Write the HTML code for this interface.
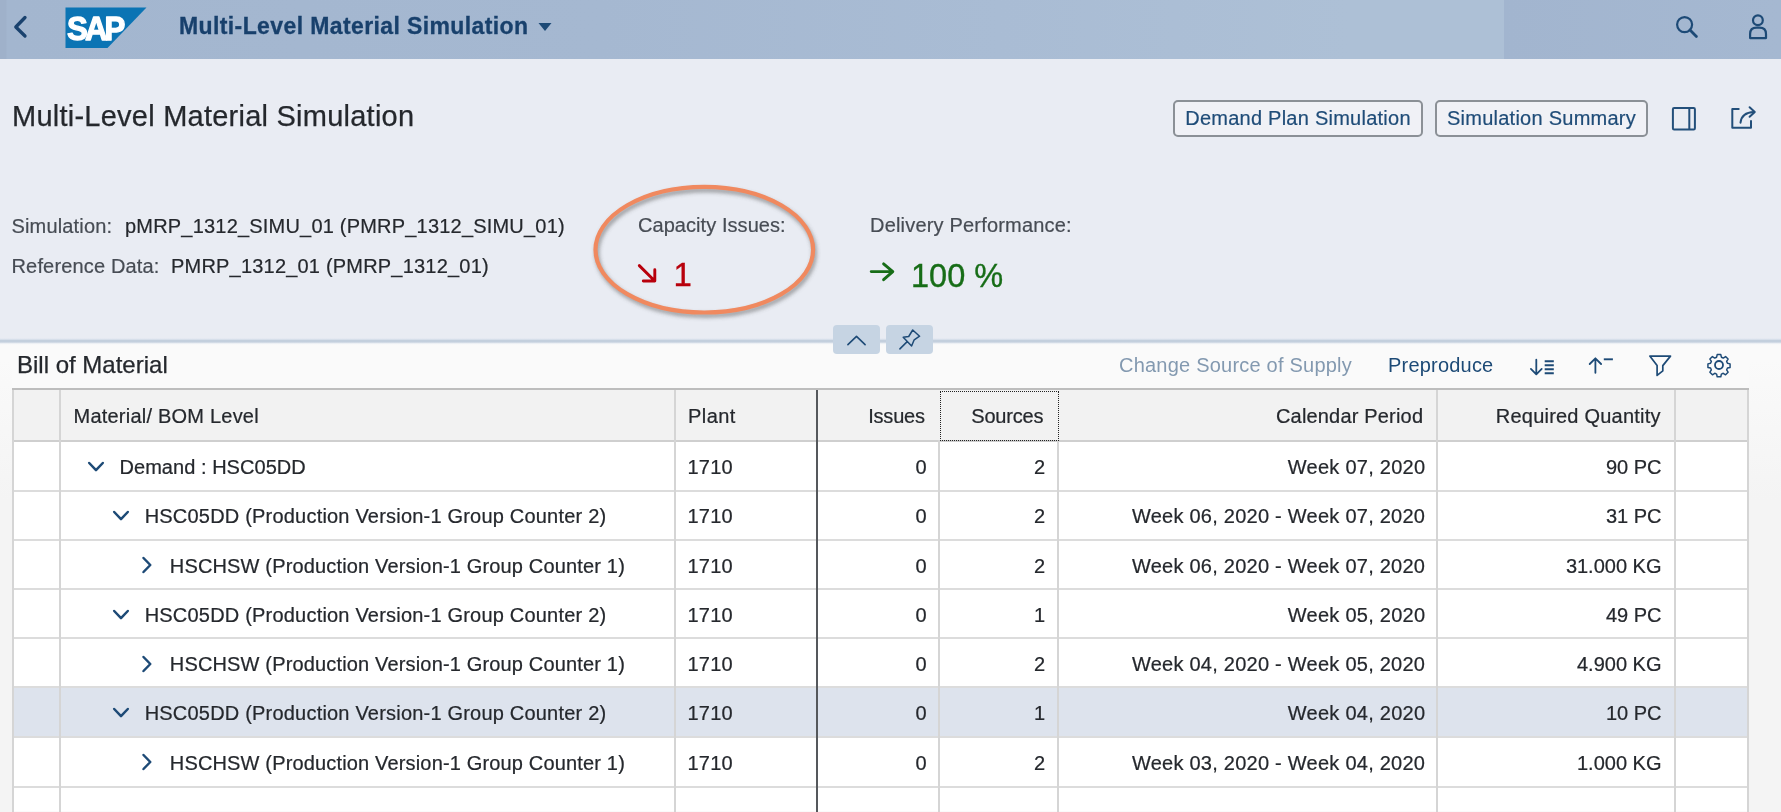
<!DOCTYPE html>
<html lang="en">
<head>
<meta charset="utf-8">
<title>Multi-Level Material Simulation</title>
<style>
*{box-sizing:border-box;margin:0;padding:0}
html,body{width:1781px;height:812px;overflow:hidden}
body{position:relative;background:#e9ecf3;font-family:"Liberation Sans",sans-serif;color:#2b2e33}
.abs{position:absolute;white-space:nowrap}
.cell,.btn span,.abs{will-change:opacity}
/* shell header */
#shell{position:absolute;left:0;top:0;width:1781px;height:59px;background:linear-gradient(90deg,#9fb1ca 0,#9fb1ca 6px,#a3b6cf 7px,#a5b8d1 600px,#a9bcd4 1000px,#adc0d6 1350px,#adc0d6 1503px)}
#shell .r{position:absolute;left:1504px;top:0;width:277px;height:59px;background:linear-gradient(90deg,#a2b5cf,#a5b8d1)}
#shelltitle{left:179px;top:12px;font-size:23px;letter-spacing:.39px;font-weight:bold;color:#18406c;-webkit-text-stroke:.3px #18406c;line-height:28px}
/* page header */
#ptitle{left:12px;top:98px;font-size:29px;letter-spacing:.24px;-webkit-text-stroke:.25px #25282d;line-height:36px;color:#25282d}
.btn span{display:inline-block}
.btn{position:absolute;top:100px;height:37px;border:2px solid #8b9096;border-radius:5px;background:#f0f1f6;color:#1f4c78;-webkit-text-stroke:.2px #1f4c78;font-size:20px;letter-spacing:.25px;line-height:33px;text-align:center;white-space:nowrap}
.lbl{font-size:20px;letter-spacing:.16px;color:#474c54;-webkit-text-stroke:.2px #474c54;line-height:24px}
.val{font-size:20px;letter-spacing:.2px;-webkit-text-stroke:.2px #25282d;color:#25282d;line-height:24px}
/* content */
#content{position:absolute;left:0;top:345px;width:1781px;height:467px;background:#fafafa}
#divider{position:absolute;left:0;top:338px;width:1781px;height:7px;background:linear-gradient(#e9ecf4 0%,#dde4ee 18%,#c3cfdd 32%,#c3cfdd 58%,#e4e9f0 72%,#f6f7f9 86%,#fafafa 100%)}
#tbl{position:absolute;left:0;top:0;width:1781px;height:812px}
.tbg{position:absolute;left:12px;top:388px;width:1737px;height:423px;background:#fff}
.hrow{position:absolute;left:12px;top:388px;width:1737px;height:54px;background:#f2f2f2;border-top:2px solid #bdbdbd;border-bottom:2px solid #cfcfcf}
.row{position:absolute;left:12px;width:1737px;border-bottom:2px solid #dcdcdc}
.row.sel{background:#dde3ed}
.vl{position:absolute;top:390px;width:2px;height:422px;background:#d5d5d5}
.vl.dk{background:#55585c}
.cell{position:absolute;top:13px;font-size:20px;-webkit-text-stroke:.22px #25282d;line-height:24px;color:#25282d;white-space:nowrap}
.hrow .cell{top:14px}
.side{position:absolute;top:360px;height:452px;background:linear-gradient(#fafafa,#f4f4f4 140px)}
.cov{position:absolute;top:390px;width:2px;height:50px;background:#f2f2f2}
.focus{position:absolute;left:940px;top:391px;width:119px;height:50px;border:1px dotted #222;}
.rt{text-align:right}
</style>
</head>
<body>
<div id="shell"><div class="r"></div>
  <svg class="abs" style="left:12px;top:14px" width="18" height="26" viewBox="0 0 18 26"><path d="M13 3.500 L3.800 13 L13 22" fill="none" stroke="#1a426e" stroke-width="3.300" stroke-linecap="round" stroke-linejoin="round"/></svg>
  <svg class="abs" style="left:65px;top:7px" width="83" height="42" viewBox="0 0 83 42"><path d="M0.5 0.5 H81.5 L42.5 41 H0.5 Z" fill="#0b74b4"/><text x="2" y="33" font-family="Liberation Sans, sans-serif" font-weight="bold" font-size="32.500" fill="#fff" stroke="#fff" stroke-width="1.300" stroke-linejoin="round" textLength="55.500" lengthAdjust="spacingAndGlyphs" letter-spacing="-3">SAP</text></svg>
  <div id="shelltitle" class="abs">Multi-Level Material Simulation</div>
  <svg class="abs" style="left:537px;top:21px" width="16" height="12" viewBox="0 0 16 12"><path d="M1.5 2 H14.5 L8 10 Z" fill="#1d4a76"/></svg>
  <svg class="abs" style="left:1674px;top:14px" width="26" height="26" viewBox="0 0 26 26"><circle cx="10.600" cy="10.600" r="7.500" fill="none" stroke="#1d4a76" stroke-width="2.200"/><path d="M16 16 L22.400 22.400" stroke="#1d4a76" stroke-width="2.800" stroke-linecap="round"/></svg>
  <svg class="abs" style="left:1745px;top:12px" width="24" height="28" viewBox="0 0 24 28"><circle cx="12.900" cy="8.300" r="4.900" fill="none" stroke="#1d4a76" stroke-width="2.200"/><path d="M5.100 26.100 V22 Q5.100 15.700 11.600 15.700 H14.400 Q21 15.700 21 22 V26.100 Z" fill="none" stroke="#1d4a76" stroke-width="2.200" stroke-linejoin="round"/></svg>
</div>

<div id="ptitle" class="abs">Multi-Level Material Simulation</div>
<div class="btn" style="left:1173px;width:250px"><span>Demand Plan Simulation</span></div>
<div class="btn" style="left:1435px;width:213px"><span>Simulation Summary</span></div>
<svg class="abs" style="left:1670px;top:105px" width="28" height="28" viewBox="0 0 28 28"><rect x="2.900" y="3" width="22" height="21.400" rx="1.200" fill="none" stroke="#234f7a" stroke-width="2"/><path d="M19.300 3 V24.400" stroke="#234f7a" stroke-width="2"/></svg>
<svg class="abs" style="left:1729px;top:104px" width="30" height="28" viewBox="0 0 30 28"><path d="M9.700 5.100 H3.300 V23.800 H22 V17" fill="none" stroke="#234f7a" stroke-width="2" stroke-linejoin="round" stroke-linecap="round"/><path d="M11.500 18.700 Q12.500 8.300 25 7.900" fill="none" stroke="#234f7a" stroke-width="2" stroke-linecap="round"/><path d="M20.600 3.200 L25.800 7.900 L20.600 12.800" fill="none" stroke="#234f7a" stroke-width="2" stroke-linejoin="round" stroke-linecap="round"/></svg>

<div class="abs lbl" style="left:11.500px;top:214px">Simulation:</div>
<div class="abs val" style="left:125px;top:214px">pMRP_1312_SIMU_01 (PMRP_1312_SIMU_01)</div>
<div class="abs lbl" style="left:11.500px;top:254px">Reference Data:</div>
<div class="abs val" style="left:171px;top:254px">PMRP_1312_01 (PMRP_1312_01)</div>

<div class="abs lbl" style="left:638px;top:213px;letter-spacing:.06px">Capacity Issues:</div>
<div class="abs lbl" style="left:870px;top:213px;letter-spacing:.19px">Delivery Performance:</div>
<svg class="abs" style="left:635px;top:261px" width="24" height="24" viewBox="0 0 24 24"><path d="M4.300 4.600 L19 19.300 M8.300 20 H19.800 V8.800" fill="none" stroke="#b8000c" stroke-width="2.900" stroke-linecap="round" stroke-linejoin="round"/></svg>
<div class="abs" style="left:673.500px;top:255px;font-size:33px;line-height:40px;color:#b8000c;-webkit-text-stroke:.35px #b8000c">1</div>
<svg class="abs" style="left:868px;top:259px" width="28" height="24" viewBox="0 0 28 24"><path d="M3.200 12.600 H24 M15.600 4.900 L24.800 12.600 L15.600 20.700" fill="none" stroke="#176d17" stroke-width="2.900" stroke-linecap="round" stroke-linejoin="round"/></svg>
<div class="abs" style="left:911px;top:256px;font-size:32.500px;line-height:40px;color:#176d17;-webkit-text-stroke:.35px #176d17">100 %</div>
<svg class="abs" style="left:585px;top:176px" width="240" height="150" viewBox="0 0 240 150"><defs><filter id="sh" x="-10%" y="-10%" width="120%" height="130%"><feGaussianBlur stdDeviation="2.2"/></filter></defs><ellipse cx="119.300" cy="73.700" rx="108.800" ry="62.800" fill="none" stroke="#5a5a5a" stroke-opacity=".7" stroke-width="3.500" filter="url(#sh)" transform="translate(1.500,3)"/><ellipse cx="119.300" cy="73.700" rx="108.800" ry="62.800" fill="none" stroke="#f0895f" stroke-width="4.200"/></svg>

<div id="divider"></div>
<div id="content"></div>
<div class="abs" style="left:833px;top:325px;width:47px;height:29px;background:#c6d4e3;border-radius:4px"></div>
<div class="abs" style="left:886px;top:325px;width:47px;height:29px;background:#c6d4e3;border-radius:4px"></div>
<svg class="abs" style="left:845px;top:332px" width="24" height="16" viewBox="0 0 24 16"><path d="M2.900 12.600 L11.500 4.300 L20.100 12.600" fill="none" stroke="#1d4a76" stroke-width="1.600" stroke-linecap="round" stroke-linejoin="round"/></svg>
<svg class="abs" style="left:895px;top:325px" width="30" height="30" viewBox="0 0 30 30"><path d="M17.700 5 L24.600 11.200 L19.200 14.800 L16.600 21 L8.200 12.300 L13.700 11.500 Z M12.200 16.600 L4.900 23.900" fill="none" stroke="#1d4a76" stroke-width="1.500" stroke-linejoin="round" stroke-linecap="round"/></svg>

<div class="abs" style="left:17px;top:351px;font-size:24px;-webkit-text-stroke:.25px #25282d;line-height:28px;color:#25282d">Bill of Material</div>
<div class="abs" style="left:1119px;top:353px;font-size:20px;letter-spacing:.22px;line-height:24px;color:#8399b0">Change Source of Supply</div>
<div class="abs" style="left:1388px;top:353px;font-size:20px;letter-spacing:.2px;line-height:24px;color:#1d4a76">Preproduce</div>
<svg class="abs" style="left:1528px;top:354px" width="28" height="24" viewBox="0 0 28 24"><path d="M8.300 5.700 V20 M2.900 14.900 L8.300 20.300 L13.700 14.900" fill="none" stroke="#1d4a76" stroke-width="1.800" stroke-linecap="round" stroke-linejoin="round"/><path d="M16.700 7.200 H25.800 M16.700 11.200 H25.800 M16.700 15.200 H25.800 M16.700 19.200 H25.800" stroke="#1d4a76" stroke-width="1.900"/></svg>
<svg class="abs" style="left:1587px;top:352px" width="28" height="24" viewBox="0 0 28 24"><path d="M8.400 20.800 V6.600 M2.700 12 L8.400 6.300 L14.100 12" fill="none" stroke="#1d4a76" stroke-width="1.800" stroke-linecap="round" stroke-linejoin="round"/><path d="M16.800 7.300 H25.900" stroke="#1d4a76" stroke-width="1.900"/></svg>
<svg class="abs" style="left:1646px;top:353px" width="28" height="26" viewBox="0 0 28 26"><path d="M3.800 3.100 H24.500 L16.800 12.600 V17.900 L11.100 22.400 V12.600 Z" fill="none" stroke="#1d4a76" stroke-width="1.700" stroke-linejoin="round"/></svg>
<svg class="abs" style="left:1705.300px;top:351px" width="28" height="28" viewBox="0 0 28 28"><g fill="none" stroke="#1d4a76" stroke-width="1.800" stroke-linejoin="round"><circle cx="14" cy="14" r="4"/><path d="M11.800 2.500 h4.400 l.7 3.200 l2.300 1 l2.800 -1.800 l3.100 3.100 l-1.800 2.800 l1 2.300 l3.200 .7 v4.400 l-3.200 .7 l-1 2.300 l1.800 2.800 l-3.100 3.100 l-2.800 -1.800 l-2.300 1 l-.7 3.200 h-4.400 l-.7 -3.200 l-2.300 -1 l-2.800 1.800 l-3.100 -3.100 l1.800 -2.800 l-1 -2.300 l-3.200 -.7 v-4.400 l3.200 -.7 l1 -2.300 l-1.800 -2.800 l3.100 -3.100 l2.800 1.800 l2.300 -1 z" transform="translate(14 14) scale(.82) translate(-14 -15.200)"/></g></svg>

<div id="tbl">
  <div class="side" style="left:0;width:12px"></div><div class="side" style="left:1749px;width:32px"></div>
  <div class="tbg"></div>
  <div class="hrow">
    <div class="cell" style="left:61.5px;top:14px;letter-spacing:0.22px">Material/ BOM Level</div>
    <div class="cell" style="left:676px;top:14px;letter-spacing:0.44px">Plant</div>
    <div class="cell rt" style="right:824.2px;top:14px;letter-spacing:-0.2px">Issues</div>
    <div class="cell rt" style="right:705.69px;top:14px;letter-spacing:-0.19px">Sources</div>
    <div class="cell rt" style="right:325.82px;top:14px;letter-spacing:0.18px">Calendar Period</div>
    <div class="cell rt" style="right:88.28px;top:14px;letter-spacing:0.22px">Required Quantity</div>
  </div>
  <div class="row" style="top:441px;height:51px"><svg class="abs" style="left:75px;top:16.9px" width="18" height="18" viewBox="0 0 18 18"><path d="M2.200 5 L9 12.200 L15.800 5" fill="none" stroke="#1d4a76" stroke-width="2.500" stroke-linecap="round" stroke-linejoin="round"/></svg>
    <div class="cell" style="left:107.5px;top:14px;letter-spacing:0.04px">Demand : HSC05DD</div>
    <div class="cell" style="left:675.5px;top:14px;letter-spacing:0.25px">1710</div>
    <div class="cell rt" style="right:822.5px;top:14px">0</div>
    <div class="cell rt" style="right:704px;top:14px">2</div>
    <div class="cell rt" style="right:323.75px;top:14px;letter-spacing:0.25px">Week 07, 2020</div>
    <div class="cell rt" style="right:87.5px;top:14px">90 PC</div>
  </div>
  <div class="row" style="top:492px;height:49px"><svg class="abs" style="left:100.3px;top:15.2px" width="18" height="18" viewBox="0 0 18 18"><path d="M2.200 5 L9 12.200 L15.800 5" fill="none" stroke="#1d4a76" stroke-width="2.500" stroke-linecap="round" stroke-linejoin="round"/></svg>
    <div class="cell" style="left:132.7px;top:12px;letter-spacing:0.2px">HSC05DD (Production Version-1 Group Counter 2)</div>
    <div class="cell" style="left:675.5px;top:12px;letter-spacing:0.25px">1710</div>
    <div class="cell rt" style="right:822.5px;top:12px">0</div>
    <div class="cell rt" style="right:704px;top:12px">2</div>
    <div class="cell rt" style="right:323.75px;top:12px;letter-spacing:0.25px">Week 06, 2020 - Week 07, 2020</div>
    <div class="cell rt" style="right:87.5px;top:12px">31 PC</div>
  </div>
  <div class="row" style="top:541px;height:49px"><svg class="abs" style="left:125.5px;top:15.1px" width="18" height="18" viewBox="0 0 18 18"><path d="M5.500 2 L12.300 9 L5.500 16" fill="none" stroke="#1d4a76" stroke-width="2.500" stroke-linecap="round" stroke-linejoin="round"/></svg>
    <div class="cell" style="left:157.8px;top:13px;letter-spacing:0.16px">HSCHSW (Production Version-1 Group Counter 1)</div>
    <div class="cell" style="left:675.5px;top:13px;letter-spacing:0.25px">1710</div>
    <div class="cell rt" style="right:822.5px;top:13px">0</div>
    <div class="cell rt" style="right:704px;top:13px">2</div>
    <div class="cell rt" style="right:323.75px;top:13px;letter-spacing:0.25px">Week 06, 2020 - Week 07, 2020</div>
    <div class="cell rt" style="right:87.5px;top:13px">31.000 KG</div>
  </div>
  <div class="row" style="top:590px;height:49px"><svg class="abs" style="left:100.3px;top:15.8px" width="18" height="18" viewBox="0 0 18 18"><path d="M2.200 5 L9 12.200 L15.800 5" fill="none" stroke="#1d4a76" stroke-width="2.500" stroke-linecap="round" stroke-linejoin="round"/></svg>
    <div class="cell" style="left:132.7px;top:13px;letter-spacing:0.2px">HSC05DD (Production Version-1 Group Counter 2)</div>
    <div class="cell" style="left:675.5px;top:13px;letter-spacing:0.25px">1710</div>
    <div class="cell rt" style="right:822.5px;top:13px">0</div>
    <div class="cell rt" style="right:704px;top:13px">1</div>
    <div class="cell rt" style="right:323.75px;top:13px;letter-spacing:0.25px">Week 05, 2020</div>
    <div class="cell rt" style="right:87.5px;top:13px">49 PC</div>
  </div>
  <div class="row" style="top:639px;height:49px"><svg class="abs" style="left:125.5px;top:15.7px" width="18" height="18" viewBox="0 0 18 18"><path d="M5.500 2 L12.300 9 L5.500 16" fill="none" stroke="#1d4a76" stroke-width="2.500" stroke-linecap="round" stroke-linejoin="round"/></svg>
    <div class="cell" style="left:157.8px;top:13px;letter-spacing:0.16px">HSCHSW (Production Version-1 Group Counter 1)</div>
    <div class="cell" style="left:675.5px;top:13px;letter-spacing:0.25px">1710</div>
    <div class="cell rt" style="right:822.5px;top:13px">0</div>
    <div class="cell rt" style="right:704px;top:13px">2</div>
    <div class="cell rt" style="right:323.75px;top:13px;letter-spacing:0.25px">Week 04, 2020 - Week 05, 2020</div>
    <div class="cell rt" style="right:87.5px;top:13px">4.900 KG</div>
  </div>
  <div class="row sel" style="top:688px;height:50px"><svg class="abs" style="left:100.3px;top:16.4px" width="18" height="18" viewBox="0 0 18 18"><path d="M2.200 5 L9 12.200 L15.800 5" fill="none" stroke="#1d4a76" stroke-width="2.500" stroke-linecap="round" stroke-linejoin="round"/></svg>
    <div class="cell" style="left:132.7px;top:13px;letter-spacing:0.2px">HSC05DD (Production Version-1 Group Counter 2)</div>
    <div class="cell" style="left:675.5px;top:13px;letter-spacing:0.25px">1710</div>
    <div class="cell rt" style="right:822.5px;top:13px">0</div>
    <div class="cell rt" style="right:704px;top:13px">1</div>
    <div class="cell rt" style="right:323.75px;top:13px;letter-spacing:0.25px">Week 04, 2020</div>
    <div class="cell rt" style="right:87.5px;top:13px">10 PC</div>
  </div>
  <div class="row" style="top:738px;height:50px"><svg class="abs" style="left:125.5px;top:15.3px" width="18" height="18" viewBox="0 0 18 18"><path d="M5.500 2 L12.300 9 L5.500 16" fill="none" stroke="#1d4a76" stroke-width="2.500" stroke-linecap="round" stroke-linejoin="round"/></svg>
    <div class="cell" style="left:157.8px;top:13px;letter-spacing:0.16px">HSCHSW (Production Version-1 Group Counter 1)</div>
    <div class="cell" style="left:675.5px;top:13px;letter-spacing:0.25px">1710</div>
    <div class="cell rt" style="right:822.5px;top:13px">0</div>
    <div class="cell rt" style="right:704px;top:13px">2</div>
    <div class="cell rt" style="right:323.75px;top:13px;letter-spacing:0.25px">Week 03, 2020 - Week 04, 2020</div>
    <div class="cell rt" style="right:87.5px;top:13px">1.000 KG</div>
  </div>
  <div class="row" style="top:788px;height:40px;border:0"></div>
  <div class="vl" style="left:12px"></div>
  <div class="vl" style="left:59px"></div>
  <div class="vl" style="left:674px"></div>
  <div class="vl dk" style="left:816px"></div>
  <div class="vl" style="left:938px"></div>
  <div class="vl" style="left:1057px"></div>
  <div class="vl" style="left:1436px"></div>
  <div class="vl" style="left:1674px"></div>
  <div class="vl" style="left:1747px"></div>
  <div class="cov" style="left:938px"></div><div class="cov" style="left:1057px"></div>
  <div class="focus"></div>
</div>
</body>
</html>
